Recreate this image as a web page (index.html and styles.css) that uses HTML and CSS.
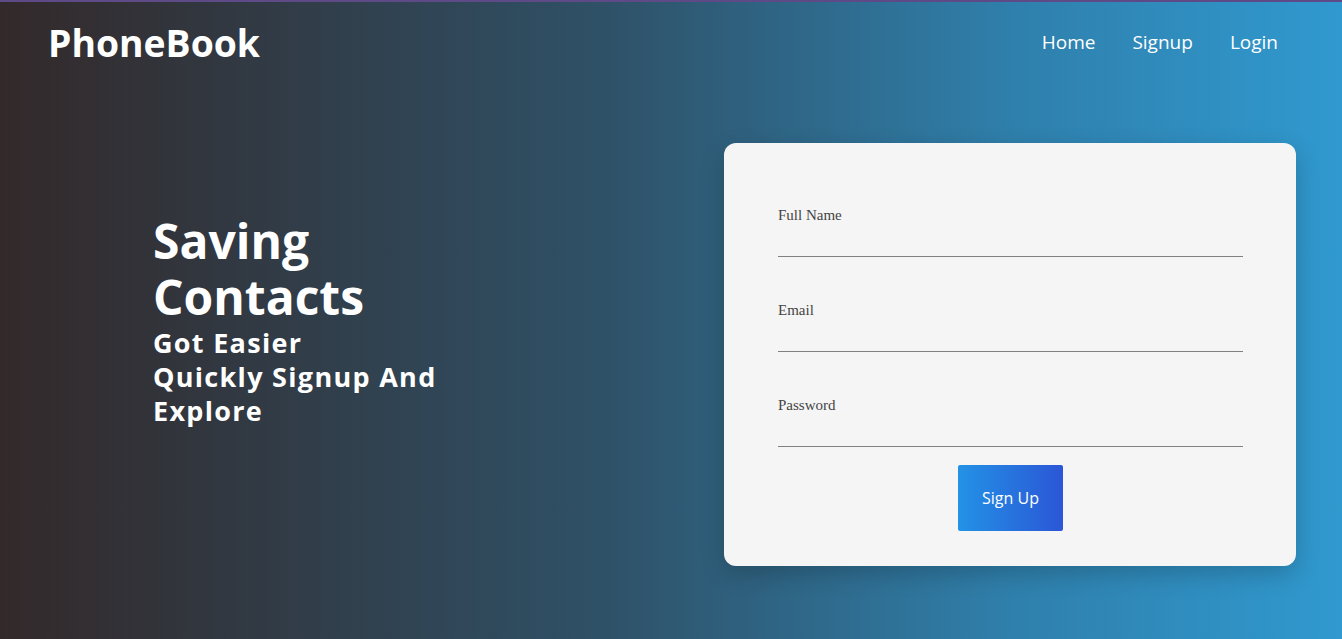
FILE: index.html
```html
<!DOCTYPE html>
<html lang="en">
<head>
<meta charset="utf-8">
<title>PhoneBook</title>
<link rel="stylesheet" href="styles.css">
</head>
<body>
<div class="page">
  <header class="header">
    <div class="logo">PhoneBook</div>
    <nav class="nav">
      <a href="#" class="nav-link">Home</a>
      <a href="#" class="nav-link">Signup</a>
      <a href="#" class="nav-link">Login</a>
    </nav>
  </header>
  <main class="main">
    <section class="hero">
      <h1 class="hero-title">Saving Contacts</h1>
      <h2 class="hero-sub">Got Easier<br>Quickly Signup And Explore</h2>
    </section>
    <form class="card">
      <div class="field">
        <label class="label" for="name">Full Name</label>
        <input class="input" id="name" type="text">
      </div>
      <div class="field">
        <label class="label" for="email">Email</label>
        <input class="input" id="email" type="email">
      </div>
      <div class="field">
        <label class="label" for="pw">Password</label>
        <input class="input" id="pw" type="password">
      </div>
      <div class="actions">
        <button type="button" class="btn">Sign Up</button>
      </div>
    </form>
  </main>
</div>
</body>
</html>
```

FILE: styles.css
```css
* { box-sizing: border-box; }
html, body { margin: 0; padding: 0; }
body {
  font-family: "Open Sans", "Noto Sans", sans-serif;
  color: #fff;
}
.page {
  min-height: 639px;
  height: 639px;
  overflow: hidden;
  border-top: 2px solid #5d4a86;
  background: linear-gradient(to right, #33292a 0%, #2f5167 45%, #2f7fab 75%, #3099cf 100%);
}
.header {
  height: 84px;
  display: flex;
  align-items: center;
  justify-content: space-between;
  padding: 0 64px 0 48px;
}
.logo {
  font-size: 37.3px;
  font-weight: 700;
  line-height: 1;
  margin-top: -2px;
}
.nav {
  display: flex;
  gap: 37px;
  margin-top: -4px;
}
.nav-link {
  color: #fff;
  text-decoration: none;
  font-size: 19px;
}
.main {
  display: flex;
  justify-content: space-between;
  align-items: flex-start;
  padding: 57px 46px 0 153px;
}
.hero {
  width: 330px;
  margin-top: 70px;
}
.hero-title {
  margin: 0;
  font-size: 48px;
  font-weight: 700;
  line-height: 56px;
  letter-spacing: 0;
}
.hero-sub {
  margin: 1px 0 0;
  font-size: 27px;
  font-weight: 700;
  line-height: 34px;
  letter-spacing: 1.3px;
}
.card {
  width: 572px;
  background: #f5f5f5;
  border-radius: 12px;
  padding: 64px 53px 35px 54px;
  box-shadow: 0 8px 24px rgba(0, 0, 0, 0.2);
  display: flex;
  flex-direction: column;
  gap: 45px;
}
.field {
  display: flex;
  flex-direction: column;
}
.label {
  font-family: "Liberation Serif", "DejaVu Serif", serif;
  font-size: 15px;
  line-height: 16px;
  color: #444;
}
.input {
  height: 34px;
  border: none;
  border-bottom: 1px solid #808080;
  background: transparent;
  outline: none;
  padding: 0;
}
.actions {
  display: flex;
  justify-content: center;
  margin-top: -27px;
}
.btn {
  width: 105px;
  height: 66px;
  border: none;
  border-radius: 2px;
  background: linear-gradient(to right, #2392e6, #2b56d6);
  color: #fff;
  font-family: "Open Sans", "Noto Sans", sans-serif;
  font-size: 16px;
}
```
